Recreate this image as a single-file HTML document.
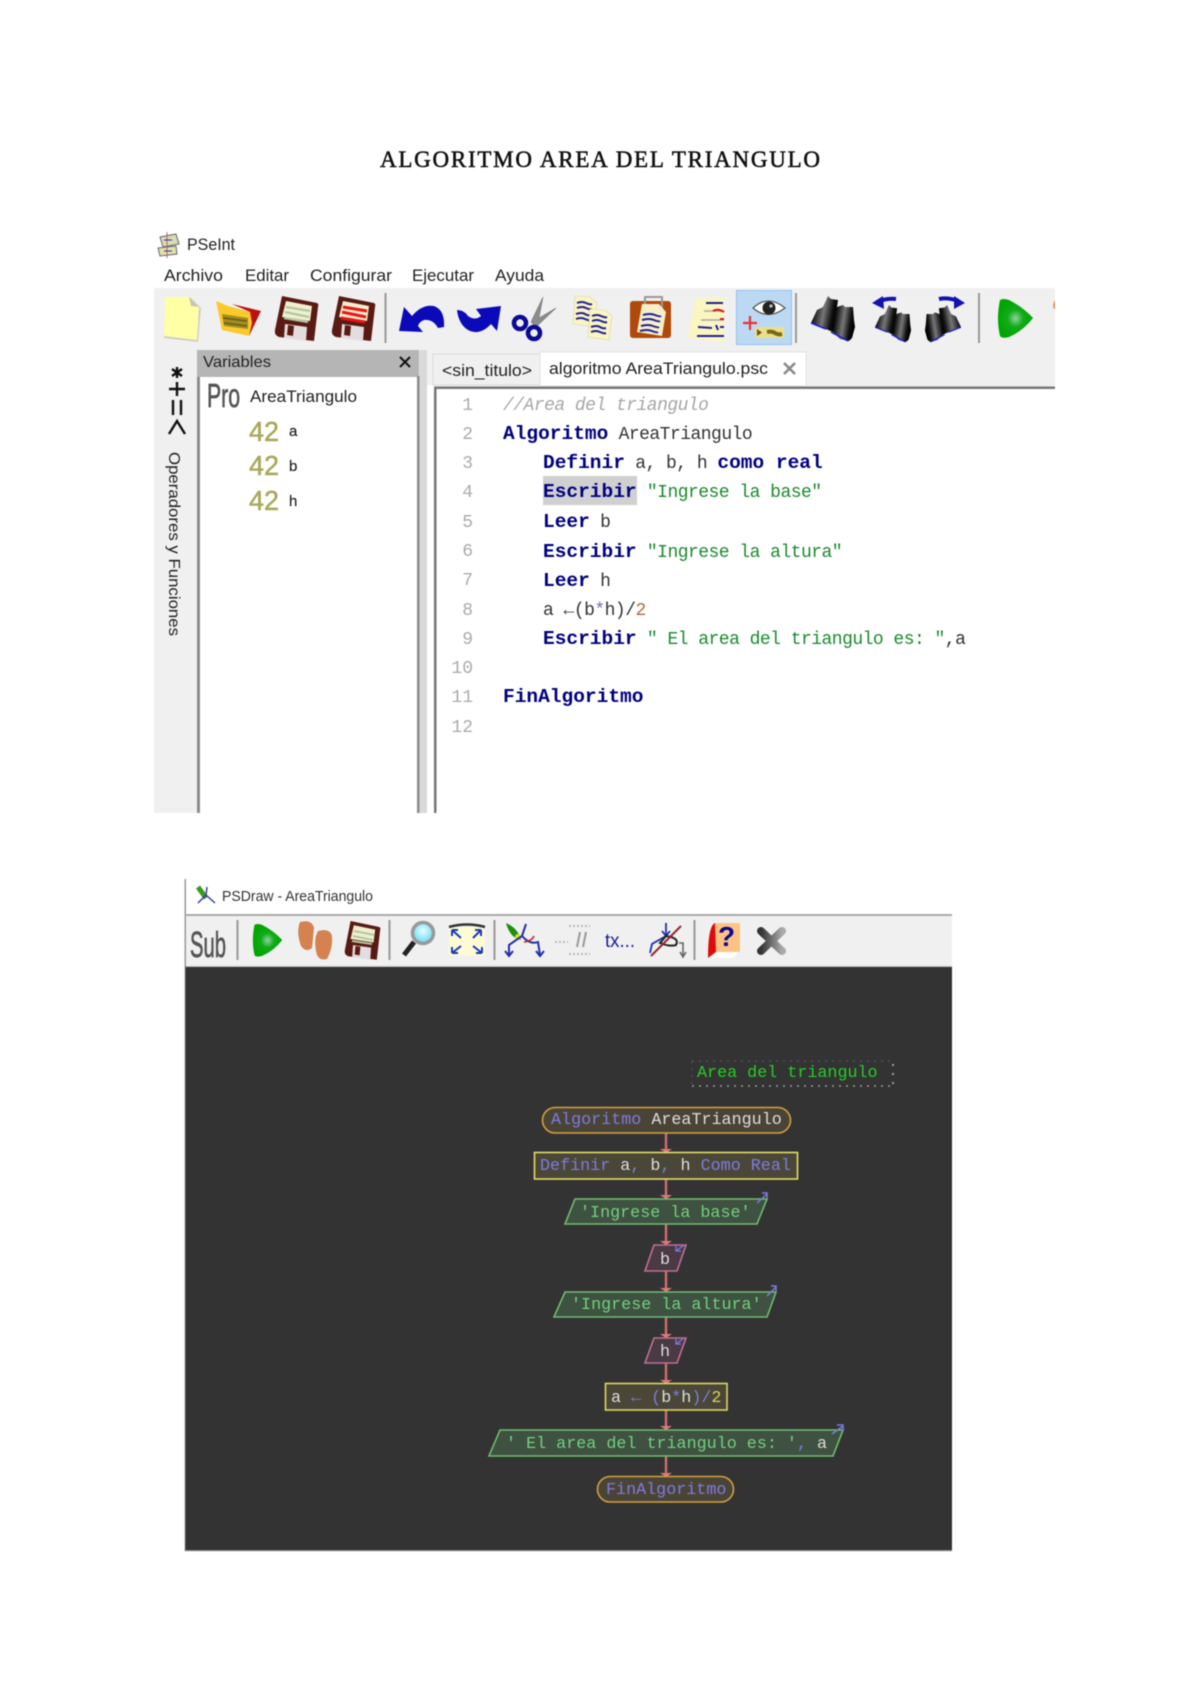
<!DOCTYPE html>
<html>
<head>
<meta charset="utf-8">
<style>
html,body{margin:0;padding:0;background:#fff;width:1200px;height:1696px;overflow:hidden}
svg{display:block;filter:blur(0.45px)}
text{white-space:pre}
.ui{font-family:"Liberation Sans",sans-serif;fill:#222}
.m{font-family:"Liberation Mono",monospace;font-size:18px;letter-spacing:-.53px;fill:#333}
.k{font-weight:bold;fill:#00007f;font-size:19.5px;letter-spacing:0}
.s{fill:#1b8a2e}
.ln{font-family:"Liberation Mono",monospace;font-size:18px;fill:#aaa;text-anchor:end}
.f{font-family:"Liberation Mono",monospace;font-size:16.73px}
.p{fill:#7c7ce0}.w{fill:#ddd}.g{fill:#72d080}
.n{font-family:"Liberation Sans",sans-serif;font-size:28px;fill:#a9a95c;stroke:#a9a95c;stroke-width:.5}
.v{font-family:"Liberation Sans",sans-serif;font-size:15px;fill:#222;stroke:#222;stroke-width:.2}
</style>
</head>
<body>
<svg xmlns="http://www.w3.org/2000/svg" width="1200" height="1696" viewBox="0 0 1200 1696">
<defs>
<linearGradient id="bin" x1="0" y1="0" x2="1" y2=".25"><stop offset="0" stop-color="#000"/><stop offset=".2" stop-color="#111"/><stop offset=".55" stop-color="#777"/><stop offset=".85" stop-color="#111"/><stop offset="1" stop-color="#000"/></linearGradient>
<radialGradient id="pl" cx=".5" cy=".5" r=".5"><stop offset="0" stop-color="#8fd49a"/><stop offset=".45" stop-color="#12ab1c"/><stop offset="1" stop-color="#00a600"/></radialGradient>
<radialGradient id="lens" cx=".5" cy=".4" r=".6"><stop offset="0" stop-color="#e6ffff"/><stop offset="1" stop-color="#5fd8f4"/></radialGradient>
<linearGradient id="xg" x1="0" y1="0" x2="1" y2="0"><stop offset="0" stop-color="#333"/><stop offset="1" stop-color="#aaa"/></linearGradient>
<g id="save">
<path d="M8 0 L43 7 Q45 8 44 11 L40 45 L5 41 Q0 39 1 34 Z" fill="#5a1a14"/>
<path d="M12 5 L38 10 L36 25 L8 21 Z" fill="#eef0cf"/>
<path d="M11 28 L33 31 L32 45 L10 42 Z" fill="#e4dde0"/>
<path d="M14 29 L20 30 L19 40 L13 39 Z" fill="#5a1a14"/>
</g>
<g id="play"><path d="M3 1 Q6 -1 12 1 Q26 8 36 19 Q26 32 12 38 Q5 40 3 37 Q-1 20 3 1 Z" fill="url(#pl)"/></g>
<g id="binL">
<path d="M0 27 L6 14 L12 11 L17 0 L20 3 L27 4 L26 11 L24 33 L22 36 Z" fill="url(#bin)"/>
<path d="M26 11 L32 9 L34 11 L42 11 L43 24 L44 31 L41 42 L38 45 L29 43 L22 36 L24 20 Z" fill="url(#bin)"/>
<path d="M0 27 L15 33 M20 36 L37 45" stroke="#1a1ae0" stroke-width="1.5" fill="none"/>
</g>
<g id="note"><path d="M2 0 L17 1 L24 7 L21 31 L0 28 Z" fill="#fbf5c0" stroke="#d8d4a8" stroke-width=".6"/><path d="M4 7 Q9 5 13 7 T19 8 M4 12 Q9 10 13 12 T19 13 M3 18 Q9 16 12 18 T18 19 M3 23 Q8 21 12 23 T18 24" stroke="#20209a" stroke-width="2" fill="none"/></g>
</defs>
<rect width="1200" height="1696" fill="#fff"/>

<!-- Title -->
<text x="380" y="167" font-family="'Liberation Serif',serif" font-size="23" fill="#111" stroke="#111" stroke-width=".55" textLength="440" lengthAdjust="spacing">ALGORITMO AREA DEL TRIANGULO</text>

<!-- PSeInt title -->
<g>
<path d="M160 237 L176 234 L179 244 L163 247 Z" fill="#d8dcb0" stroke="#667" stroke-width="1"/>
<path d="M158 248 L176 246 L177 254 L160 256 Z" fill="#dfe2a8" stroke="#667" stroke-width="1"/>
<path d="M167 232 V258" stroke="#b66" stroke-width="1"/>
<path d="M164 240 h8 M164 251 h8" stroke="#33a" stroke-width="1"/>
</g>
<text class="ui" x="187" y="250" font-size="17" textLength="48" lengthAdjust="spacingAndGlyphs">PSeInt</text>
<g class="ui" font-size="17">
<text class="ui" x="164" y="281" font-size="17" textLength="59" lengthAdjust="spacingAndGlyphs">Archivo</text>
<text class="ui" x="245" y="281" font-size="17" textLength="44" lengthAdjust="spacingAndGlyphs">Editar</text>
<text class="ui" x="310" y="281" font-size="17" textLength="82" lengthAdjust="spacingAndGlyphs">Configurar</text>
<text class="ui" x="412" y="281" font-size="17" textLength="62" lengthAdjust="spacingAndGlyphs">Ejecutar</text>
<text class="ui" x="495" y="281" font-size="17" textLength="49" lengthAdjust="spacingAndGlyphs">Ayuda</text>
</g>

<!-- PSeInt chrome -->
<rect x="154" y="288" width="901" height="99" fill="#f0f0f0"/>
<rect x="154" y="350" width="44" height="463" fill="#f0f0f0"/>
<rect x="197" y="350" width="3" height="463" fill="#8c8c8c"/>
<rect x="200" y="376" width="217" height="437" fill="#fff"/>
<rect x="197" y="350" width="222" height="27" fill="#b5b5b5"/>
<rect x="417" y="376" width="2.5" height="437" fill="#8c8c8c"/>
<rect x="419.5" y="350" width="7.5" height="463" fill="#d9d9d9"/>
<rect x="427" y="385" width="7" height="428" fill="#fff"/>
<rect x="434" y="387" width="2.6" height="426" fill="#777"/>
<rect x="436.6" y="389" width="618.4" height="424" fill="#fff"/>
<rect x="434" y="386.5" width="621" height="2.5" fill="#777"/>

<!-- tabs -->
<rect x="433" y="354" width="107" height="31" fill="#f0f0f0" stroke="#dcdcdc"/>
<rect x="540" y="352" width="266" height="34" fill="#fff" stroke="#e2e2e2"/>
<text class="ui" x="442" y="376" font-size="17" textLength="90" lengthAdjust="spacingAndGlyphs">&lt;sin_titulo&gt;</text>
<text class="ui" x="549" y="374" font-size="17" textLength="219" lengthAdjust="spacingAndGlyphs">algoritmo AreaTriangulo.psc</text>
<path d="M784 363 L795 374 M795 363 L784 374" stroke="#888" stroke-width="2.6"/>

<!-- Variables panel -->
<text class="ui" x="203" y="367" font-size="16" textLength="68" lengthAdjust="spacingAndGlyphs">Variables</text>
<path d="M400 357 L410 367 M410 357 L400 367" stroke="#111" stroke-width="2"/>
<text x="207" y="407" font-family="'Liberation Sans',sans-serif" font-size="33" fill="#555" stroke="#555" stroke-width=".7" textLength="33" lengthAdjust="spacingAndGlyphs">Pro</text>
<text class="ui" x="250" y="402" font-size="17" textLength="107" lengthAdjust="spacingAndGlyphs">AreaTriangulo</text>
<text class="n" x="249" y="441" textLength="30" lengthAdjust="spacingAndGlyphs">42</text>
<text class="v" x="289" y="436">a</text>
<text class="n" x="249" y="475" textLength="30" lengthAdjust="spacingAndGlyphs">42</text>
<text class="v" x="289" y="471">b</text>
<text class="n" x="249" y="510" textLength="30" lengthAdjust="spacingAndGlyphs">42</text>
<text class="v" x="289" y="506">h</text>

<!-- left strip -->
<g stroke="#111" stroke-width="2.4" fill="none">
<path d="M177 367 V378 M172 369 L182 376 M182 369 L172 376"/>
<path d="M169 389 H185 M177 382 V396"/>
<path d="M173 400 V415 M181 400 V415"/>
<path d="M169 434 L177 421 L185 434"/>
</g>
<text class="ui" transform="translate(169,452) rotate(90)" font-size="16" textLength="184" lengthAdjust="spacingAndGlyphs">Operadores y Funciones</text>

<!-- toolbar icons -->
<path d="M167 299 L191 298 L201 308 L198 342 L164 338 Z" fill="#b8b8a8" opacity=".6"/>
<path d="M165 297 L189 297 L199 307 L197 340 L164 336 Z" fill="#ffffa6"/>
<path d="M189 297 L199 307 L191 306 Z" fill="#c5c5b0"/>

<path d="M232 304 L261 311 L249 336 Q252 320 250 312 Z" fill="#bb1212"/>
<path d="M216 301 L228 306 L250 312 L252 323 L249 336 L222 330 Z" fill="#fcc92a"/>
<path d="M222 314 L248 318 L248 329 L224 326 Z" fill="#a08c22"/>
<path d="M223 318 L247 321 M224 323 L247 326" stroke="#6a5c14" stroke-width="1.4"/>

<use href="#save" x="274" y="296"/>
<path d="M286 307 L310 311 M285 312 L309 317 M284 318 L308 322" stroke="#b5c6a0" stroke-width="2.4"/>
<use href="#save" x="331" y="296"/>
<path d="M343 307 L367 311 M342 312 L366 317 M341 318 L365 322" stroke="#ee1414" stroke-width="3"/>

<rect x="384.5" y="293" width="2" height="50" fill="#999"/>

<path d="M399 331 L404 307 L412 316 Q422 304 434 306 Q445 310 444 327 L438 328 Q433 319 424 320 Q419 322 418 326 L423 332 Z" fill="#0a0ab8"/>
<path d="M457 310 Q464 310 468 316 Q475 321 481 316 L476 309 L501 306 L497 331 L491 324 Q481 335 470 331 Q459 326 457 310 Z" fill="#0a0ab8"/>

<path d="M531 322 L543 297 L539 318 L556 308 L536 327 Z" fill="#8c8c8c" stroke="#777" stroke-width=".6"/>
<circle cx="520" cy="323" r="6" fill="none" stroke="#0a0a96" stroke-width="4.5"/>
<circle cx="534" cy="333" r="6" fill="none" stroke="#0a0a96" stroke-width="4.5"/>

<use href="#note" x="573" y="296"/>
<use href="#note" x="588" y="309"/>

<rect x="630" y="301" width="41" height="37" rx="3" fill="#b04a0a"/>
<rect x="645" y="297" width="17" height="12" fill="none" stroke="#999" stroke-width="2"/>
<path d="M642 304 L659 304 L666 312 L662 336 L637 332 Z" fill="#f6efc8"/>
<path d="M643 315 Q650 313 655 315 T661 316 M642 320 Q649 318 654 320 T660 321 M641 326 Q648 324 653 326 T659 327 M640 331 Q647 329 652 331 T658 332" stroke="#20209a" stroke-width="2" fill="none"/>

<path d="M696 298 L724 298 L724 342 L688 338 Z" fill="#fbf5c0"/>
<path d="M706 303 H723" stroke="#20209a" stroke-width="2"/>
<path d="M704 311 H724" stroke="#aaa" stroke-width="1.5"/><path d="M713 311 Q718 308 724 312" stroke="#d01818" stroke-width="2" fill="none"/>
<path d="M701 320 H724" stroke="#aaa" stroke-width="1.5"/><path d="M720 319 h4" stroke="#d01818" stroke-width="2"/>
<path d="M698 327 L712 328 M716 325 L718 330 M720 327 H724" stroke="#20209a" stroke-width="2"/>
<path d="M697 336 H724" stroke="#20209a" stroke-width="2"/>

<rect x="736.5" y="290.5" width="55" height="54" fill="#bcd9f3" stroke="#92c2f2"/>
<path d="M753 308 Q768 294 785 308 Q768 321 753 308 Z" fill="#fff" stroke="#555" stroke-width="1.2"/>
<circle cx="769" cy="308" r="6.5" fill="#222"/><circle cx="771" cy="306" r="1.6" fill="#ccc"/>
<path d="M743 323 H757 M750 316 V330" stroke="#e83434" stroke-width="2.2"/>
<rect x="755" y="327" width="29" height="11" fill="#eadf8c"/>
<path d="M757 329 L762 332.500 L757 336 Z" fill="#6a5a10"/>
<path d="M767 332 Q772 331 775 333 T782 334" stroke="#7a6a18" stroke-width="4" fill="none"/>
<rect x="795" y="293" width="2" height="50" fill="#999"/>

<use href="#binL" x="811" y="296"/>
<use href="#binL" transform="translate(875,305) scale(.82)"/>
<path d="M896 299 Q887 298 877 302" stroke="#1212b0" stroke-width="4" fill="none"/>
<path d="M883 296 L872 303 L884 309 Z" fill="#1212b0"/>
<use href="#binL" transform="translate(961,305) scale(-.82,.82)"/>
<path d="M939 299 Q948 297 958 301" stroke="#1212b0" stroke-width="4" fill="none"/>
<path d="M954 296 L965 303 L954 309 Z" fill="#1212b0"/>
<rect x="978" y="293" width="2" height="50" fill="#999"/>
<use href="#play" x="997" y="299"/>
<path d="M1055 300 Q1052 305 1054 309 L1055 309 Z" fill="#e08a50"/>

<!-- code -->
<text class="ln" x="473" y="410">1</text>
<text class="ln" x="473" y="439">2</text>
<text class="ln" x="473" y="468">3</text>
<text class="ln" x="473" y="497">4</text>
<text class="ln" x="473" y="527">5</text>
<text class="ln" x="473" y="556">6</text>
<text class="ln" x="473" y="585">7</text>
<text class="ln" x="473" y="615">8</text>
<text class="ln" x="473" y="644">9</text>
<text class="ln" x="473" y="673">10</text>
<text class="ln" x="473" y="702">11</text>
<text class="ln" x="473" y="732">12</text>
<rect x="543" y="476" width="94" height="29" fill="#d0d0d0"/>
<text class="m" x="503" y="410" font-style="italic" style="fill:#a6a6a6">//Area del triangulo</text>
<text class="m" x="503" y="439"><tspan class="k">Algoritmo</tspan> AreaTriangulo</text>
<text class="m" x="543" y="468"><tspan class="k">Definir</tspan> a, b, h <tspan class="k">como real</tspan></text>
<text class="m" x="543" y="497"><tspan class="k">Escribir</tspan> <tspan class="s">"Ingrese la base"</tspan></text>
<text class="m" x="543" y="527"><tspan class="k">Leer</tspan> b</text>
<text class="m" x="543" y="557"><tspan class="k">Escribir</tspan> <tspan class="s">"Ingrese la altura"</tspan></text>
<text class="m" x="543" y="586"><tspan class="k">Leer</tspan> h</text>
<text class="m" x="543" y="615">a <tspan font-weight="bold">←</tspan>(b<tspan fill="#7070a0">*</tspan>h)/<tspan fill="#b06a40">2</tspan></text>
<text class="m" x="543" y="644"><tspan class="k">Escribir</tspan> <tspan class="s">" El area del triangulo es: "</tspan>,a</text>
<text class="m" x="503" y="702"><tspan class="k">FinAlgoritmo</tspan></text>

<!-- PSDraw window -->
<rect x="184.5" y="879" width="1.5" height="672" fill="#999"/>
<path d="M198 887 L206 898" stroke="#3a9a1a" stroke-width="5"/>
<path d="M206 895 L198 903 M206 895 L215 903 M207 887 L206 895" stroke="#3a3ab0" stroke-width="1.5" fill="none"/>
<text class="ui" x="222" y="901" font-size="14.5" textLength="151" lengthAdjust="spacingAndGlyphs" style="fill:#333">PSDraw - AreaTriangulo</text>
<rect x="185" y="914" width="767" height="2" fill="#aaa"/>
<rect x="186" y="916" width="766" height="50" fill="#f0f0f0"/>
<rect x="186" y="966" width="766" height="1.5" fill="#bbb"/>
<rect x="185.5" y="967" width="766.5" height="583" fill="#333"/>
<rect x="185" y="1550" width="767" height="1.2" fill="#888"/>

<text x="190" y="957" font-family="'Liberation Sans',sans-serif" font-size="36" fill="#555" stroke="#555" stroke-width=".7" textLength="36" lengthAdjust="spacingAndGlyphs">Sub</text>
<rect x="236.5" y="920" width="2" height="40" fill="#999"/>
<use href="#play" transform="translate(252,924) scale(.84)"/>
<g fill="#d4824f">
<path d="M300 922 Q312 919 314 928 L312 948 Q306 953 301 946 Q296 932 300 922 Z"/>
<path d="M318 931 Q330 928 332 936 Q333 948 327 959 Q320 961 317 955 Q313 940 318 931 Z"/>
</g>
<use href="#save" transform="translate(344,921) scale(.82,.86)"/>
<path d="M354 931 L374 935 M353 936 L373 940 M352 941 L372 944" stroke="#b5c6a0" stroke-width="2"/>
<rect x="388.5" y="920" width="2" height="40" fill="#999"/>
<circle cx="423" cy="933" r="10.5" fill="url(#lens)" stroke="#999" stroke-width="3.5"/>
<path d="M414 942 L404 955" stroke="#222" stroke-width="5"/>
<rect x="449" y="927" width="36" height="29" fill="#fdfbd2"/>
<path d="M449 927 Q467 922 485 927" stroke="#333" stroke-width="2.5" fill="none"/>
<g stroke="#1a3ab8" stroke-width="2" fill="none">
<path d="M452 930 L461 938 M452 930 h6 M452 930 v6"/>
<path d="M481 930 L473 938 M481 930 h-6 M481 930 v6"/>
<path d="M452 953 L461 946 M452 953 h6 M452 953 v-6"/>
<path d="M482 953 L473 946 M482 953 h-6 M482 953 v-6"/>
</g>
<rect x="493.5" y="920" width="2" height="40" fill="#999"/>
<path d="M506 923 Q518 928 521 940 Q510 938 506 923 Z" fill="#1f8f10"/>
<circle cx="518" cy="937" r="3" fill="#e8d820"/>
<g stroke="#2030a8" stroke-width="2" fill="none">
<path d="M526 924 L522 936 L509 945 V955 M522 936 Q530 945 538 942 L540 955"/>
<path d="M505 951 L509 956 L513 951 M536 951 L540 956 L544 951"/>
</g>
<path d="M524 942 Q532 941 534 936" stroke="#c01818" stroke-width="1.5" fill="none"/>
<g stroke="#aaa" stroke-width="1.6" fill="none" stroke-dasharray="2 2">
<path d="M569 926 H590 M569 954 H590 M555 942 H568"/>
</g>
<path d="M577 947 L580 932 M583 947 L586 932" stroke="#999" stroke-width="2"/>
<text x="605" y="947" font-family="'Liberation Sans',sans-serif" font-size="19" fill="#1c1c98" textLength="30" lengthAdjust="spacingAndGlyphs">tx...</text>
<g stroke="#2030a8" stroke-width="1.8" fill="none">
<path d="M666 923 V935 M662 931 L666 936 L670 931 M666 936 L652 944 L650 953"/>
</g>
<path d="M666 936 Q680 938 676 945 Q670 947 660 943 Z" fill="none" stroke="#222" stroke-width="2"/>
<path d="M679 943 L683 943 L683 956 M680 952 L683 957 L686 952" stroke="#666" stroke-width="1.6" fill="none"/>
<path d="M651 956 L681 926" stroke="#98282c" stroke-width="2"/>
<rect x="693.5" y="920" width="2" height="40" fill="#999"/>
<path d="M714 923 H740 V952 H716 Z" fill="#ffc285"/>
<path d="M715 923 Q708 926 708 958 L716 952 Z" fill="#dc0c0c"/>
<path d="M709 958 L716 952 H738 Q735 958 730 958 Z" fill="#fff"/>
<text x="718" y="946" font-family="'Liberation Sans',sans-serif" font-size="28" font-weight="bold" fill="#0a0a8c">?</text>
<path d="M761 931 L782 951 M782 931 L761 951" stroke="url(#xg)" stroke-width="8" stroke-linecap="round"/>

<!-- Flowchart -->
<path d="M692 1061 H895" fill="none" stroke="#555" stroke-width="1.2" stroke-dasharray="2 5"/>
<path d="M692 1086 H895" fill="none" stroke="#999" stroke-width="1.4" stroke-dasharray="2 5"/>
<path d="M692 1061 V1086" fill="none" stroke="#555" stroke-width="1.2" stroke-dasharray="2 5"/>
<path d="M893 1064 V1084" fill="none" stroke="#aaa" stroke-width="1.8" stroke-dasharray="2 7"/>
<text class="f" x="697" y="1077" fill="#24cc24">Area del triangulo</text>

<path d="M666 1133 V1479 " stroke="#d06e6e" stroke-width="2.4"/>
<g fill="#e07878">
<path d="M660 1149 h12 l-6 4z"/><path d="M660 1195 h12 l-6 4z"/><path d="M660 1241 h12 l-6 4z"/><path d="M660 1288 h12 l-6 4z"/><path d="M660 1334 h12 l-6 4z"/><path d="M660 1380 h12 l-6 4z"/><path d="M660 1426 h12 l-6 4z"/><path d="M660 1473 h12 l-6 4z"/>
</g>

<rect x="542.500" y="1107.500" width="248" height="25.500" rx="12.700" fill="#4a4437" stroke="#d3a040" stroke-width="1.6"/>
<text class="f" x="551" y="1124"><tspan class="p">Algoritmo</tspan><tspan class="w"> AreaTriangulo</tspan></text>

<rect x="534.500" y="1152.500" width="263" height="26.500" fill="#4a4738" stroke="#e2dc62" stroke-width="1.6"/>
<text class="f" x="540" y="1170"><tspan class="p">Definir</tspan><tspan class="w"> a</tspan><tspan class="p">,</tspan><tspan class="w"> b</tspan><tspan class="p">,</tspan><tspan class="w"> h</tspan><tspan class="p"> Como Real</tspan></text>

<path d="M575 1199 L767 1199 L757 1224 L565 1224 Z" fill="#3f5140" stroke="#6fbd70" stroke-width="1.6"/>
<text class="f" x="580" y="1217" fill="#72d080">'Ingrese la base'</text>
<path d="M757 1203 L767 1194 M762 1193 H767 V1198" stroke="#7c7ce0" stroke-width="1.5" fill="none"/>

<path d="M654 1245 L686 1245 L677 1271 L645 1271 Z" fill="#4a3a44" stroke="#c06f96" stroke-width="1.6"/>
<text class="f" x="660" y="1264" fill="#ddd">b</text>
<path d="M676 1251 L684 1245 M676 1246 V1251 H681" stroke="#7c7ce0" stroke-width="1.3" fill="none"/>

<path d="M565 1292 L776 1292 L767 1317 L554 1317 Z" fill="#3f5140" stroke="#6fbd70" stroke-width="1.6"/>
<text class="f" x="571" y="1309" fill="#72d080">'Ingrese la altura'</text>
<path d="M767 1296 L776 1287 M771 1286 H776 V1291" stroke="#7c7ce0" stroke-width="1.5" fill="none"/>

<path d="M654 1338 L686 1338 L677 1363 L645 1363 Z" fill="#4a3a44" stroke="#c06f96" stroke-width="1.6"/>
<text class="f" x="660" y="1356" fill="#ddd">h</text>
<path d="M676 1344 L684 1338 M676 1339 V1344 H681" stroke="#7c7ce0" stroke-width="1.3" fill="none"/>

<rect x="605.500" y="1383.500" width="121.500" height="26.500" fill="#4a4738" stroke="#dcd660" stroke-width="1.6"/>
<text class="f" x="611" y="1402"><tspan class="w">a</tspan><tspan class="p"> ← (</tspan><tspan class="w">b</tspan><tspan class="p">*</tspan><tspan class="w">h</tspan><tspan class="p">)/</tspan><tspan fill="#d8d060">2</tspan></text>

<path d="M500 1430 L843 1430 L833 1456 L489 1456 Z" fill="#3f5140" stroke="#6fbd70" stroke-width="1.6"/>
<text class="f" x="506" y="1448"><tspan class="g">' El area del triangulo es: '</tspan><tspan class="p">,</tspan><tspan class="w"> a</tspan></text>
<path d="M832 1434 L843 1426 M837 1425 H843 V1431" stroke="#7c7ce0" stroke-width="1.5" fill="none"/>

<rect x="597.500" y="1476.500" width="136" height="25.500" rx="12.700" fill="#4a4437" stroke="#d3a040" stroke-width="1.6"/>
<text class="f" x="606" y="1494" fill="#7c7ce0">FinAlgoritmo</text>
</svg>
</body>
</html>
